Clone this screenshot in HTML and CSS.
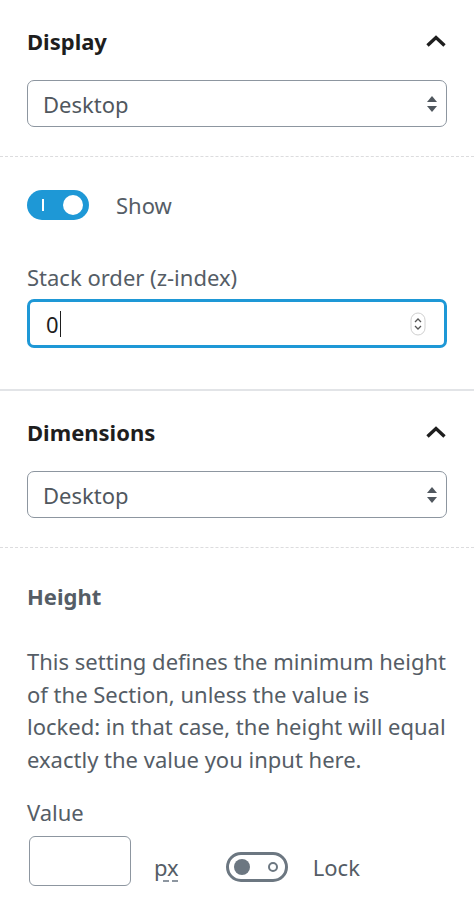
FILE: index.html
```html
<!DOCTYPE html>
<html lang="en">

<head>
    <meta charset="UTF-8">
    <meta name="viewport" content="width=device-width, initial-scale=1.0">
    <title>Block settings</title>
    <link rel="stylesheet" href="styles.css">
</head>

<body>

    <div class="sidebar">

        <!-- Painel Display -->
        <section class="panel">
            <div class="panel-head">
                <h2>Display</h2>
                <svg class="chevron" width="22" height="14" viewBox="0 0 22 14">
                    <path d="M2.5 11.5 L11 3.5 L19.5 11.5" fill="none" stroke="#1e1e1e" stroke-width="3.4" />
                </svg>
            </div>
            <div class="select">
                <span>Desktop</span>
                <svg class="arrows" width="12" height="20" viewBox="0 0 12 20">
                    <path d="M6 2 L11 8 L1 8 Z" fill="#50575e" />
                    <path d="M6 18 L11 12 L1 12 Z" fill="#50575e" />
                </svg>
            </div>
            <div class="dashed"></div>

            <div class="toggle-row">
                <span class="toggle on">
                    <i class="bar"></i>
                    <i class="knob"></i>
                </span>
                <span class="toggle-label">Show</span>
            </div>

            <label class="field-label">Stack order (z-index)</label>
            <div class="number-input">
                <span class="value">0</span><i class="caret"></i>
                <svg class="spinner" width="16" height="24" viewBox="0 0 16 24">
                    <rect x="1" y="1" width="14" height="22" rx="7" fill="#fff" stroke="#d0d0d0" />
                    <path d="M5 10 L8 7 L11 10" fill="none" stroke="#555" stroke-width="1.3" />
                    <path d="M5 14 L8 17 L11 14" fill="none" stroke="#555" stroke-width="1.3" />
                </svg>
            </div>
        </section>

        <!-- Painel Dimensions -->
        <section class="panel">
            <div class="panel-head">
                <h2>Dimensions</h2>
                <svg class="chevron" width="22" height="14" viewBox="0 0 22 14">
                    <path d="M2.5 11.5 L11 3.5 L19.5 11.5" fill="none" stroke="#1e1e1e" stroke-width="3.4" />
                </svg>
            </div>
            <div class="select">
                <span>Desktop</span>
                <svg class="arrows" width="12" height="20" viewBox="0 0 12 20">
                    <path d="M6 2 L11 8 L1 8 Z" fill="#50575e" />
                    <path d="M6 18 L11 12 L1 12 Z" fill="#50575e" />
                </svg>
            </div>
            <div class="dashed"></div>

            <h3 class="sub-title">Height</h3>
            <p class="help">This setting defines the minimum height of the Section, unless the value is locked: in that case, the height will equal exactly the value you input here.</p>

            <label class="field-label small-gap">Value</label>
            <div class="value-row">
                <div class="small-input"></div>
                <abbr class="unit" title="pixels">px</abbr>
                <span class="toggle off">
                    <i class="knob"></i>
                    <i class="ring"></i>
                </span>
                <span class="toggle-label">Lock</span>
            </div>
        </section>

    </div>

</body>

</html>
```

FILE: styles.css
```css
* {
    margin: 0;
    padding: 0;
    box-sizing: border-box;
}

body {
    font-family: "Noto Sans", "Liberation Sans", Arial, sans-serif;
    font-size: 22px;
    background-color: #fff;
    color: #555d66;
    width: 474px;
}

.panel {
    padding: 27px 27px 0;
}

.panel + .panel {
    border-top: 2px solid #e2e4e7;
}

.panel-head {
    display: flex;
    justify-content: space-between;
    align-items: center;
    height: 28px;
}

.panel-head h2 {
    font-size: 22px;
    font-weight: bold;
    color: #1e1e1e;
    line-height: 28px;
}

.chevron {
    margin-right: 0;
}

.select {
    display: flex;
    align-items: center;
    justify-content: space-between;
    height: 47px;
    margin-top: 25px;
    padding: 0 8px 0 15px;
    border: 1.5px solid #8d96a0;
    border-radius: 7px;
    color: #50575e;
}

.dashed {
    margin: 29px -27px 0;
    border-top: 1.5px dashed #dcdcde;
}

.toggle-row {
    display: flex;
    align-items: center;
    margin-top: 33px;
}

.toggle {
    position: relative;
    display: inline-block;
    width: 62px;
    height: 30px;
    border-radius: 15px;
    flex-shrink: 0;
}

.toggle.on {
    background-color: #1e98d6;
}

.toggle.on .bar {
    position: absolute;
    left: 15px;
    top: 9px;
    width: 2px;
    height: 12px;
    background: #fff;
}

.toggle.on .knob {
    position: absolute;
    right: 6px;
    top: 5px;
    width: 20px;
    height: 20px;
    border-radius: 50%;
    background: #fff;
}

.toggle.off {
    border: 3px solid #6c7781;
    background: #fff;
}

.toggle.off .knob {
    position: absolute;
    left: 5px;
    top: 4px;
    width: 16px;
    height: 16px;
    border-radius: 50%;
    background: #6c7781;
}

.toggle.off .ring {
    position: absolute;
    right: 7px;
    top: 7px;
    width: 10px;
    height: 10px;
    border-radius: 50%;
    border: 2px solid #6c7781;
}

.toggle-label {
    margin-left: 27px;
    line-height: 30px;
}

.field-label {
    display: block;
    margin-top: 42px;
    line-height: 30px;
}

.number-input {
    display: flex;
    align-items: center;
    height: 49px;
    margin-top: 7px;
    padding: 0 18px 0 16px;
    border: 3px solid #1e98d6;
    border-radius: 7px;
    color: #1e1e1e;
}

.caret {
    width: 1.5px;
    height: 26px;
    background: #1e1e1e;
    margin-left: 1px;
}

.spinner {
    margin-left: auto;
}

.panel:first-child {
    padding-bottom: 41px;
}

.sub-title {
    margin-top: 34px;
    font-size: 22px;
    font-weight: bold;
    line-height: 28px;
}

.help {
    margin-top: 35px;
    line-height: 32.5px;
}

.field-label.small-gap {
    margin-top: 23px;
    line-height: 28px;
}

.value-row {
    display: flex;
    align-items: center;
    margin-top: 10px;
}

.small-input {
    width: 102px;
    height: 50px;
    margin-left: 2px;
    border: 1.5px solid #8d96a0;
    border-radius: 6px;
}

.value-row .unit,
.value-row .toggle,
.value-row .toggle-label {
    margin-top: 11px;
}

.unit {
    margin-left: 23px;
    margin-right: 47px;
    text-decoration: underline dashed #8d96a0;
    text-underline-offset: 5px;
}

.value-row .toggle-label {
    margin-left: 25px;
}
```
